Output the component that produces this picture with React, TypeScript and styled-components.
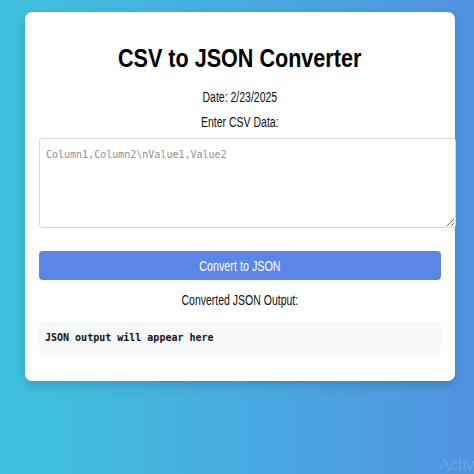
import React from "react";
import styled, { createGlobalStyle } from "styled-components";

const GlobalStyle = createGlobalStyle`
  html, body {
    margin: 0;
    padding: 0;
  }
  body {
    width: 474px;
    height: 474px;
    overflow: hidden;
    font-family: "Liberation Sans", Arial, sans-serif;
    background: linear-gradient(to right, #3ec1dd 0%, #46aedf 45%, #5092e0 100%);
  }
`;

const Page = styled.div`
  position: relative;
  width: 474px;
  height: 474px;
  padding: 12px 19px 0 25px;
  box-sizing: border-box;
`;

const Card = styled.div`
  width: 430px;
  box-sizing: border-box;
  background: #ffffff;
  border-radius: 7px;
  padding: 30px 14px 28px;
  box-shadow: 0 4px 10px rgba(0, 0, 0, 0.16);
  display: flex;
  flex-direction: column;
  align-items: stretch;
`;

/* Narrow face: the sans is drawn condensed horizontally */
const Narrow = styled.span<{ $x: number }>`
  display: inline-block;
  white-space: nowrap;
  transform: scaleX(${(p) => p.$x});
  transform-origin: center;
`;

const Title = styled.h1`
  margin: 0;
  font-size: 26px;
  font-weight: bold;
  text-align: center;
  color: #000;
  line-height: 32px;
`;

const Label = styled.p<{ $top: number }>`
  margin: ${(p) => p.$top}px 0 0;
  font-size: 14px;
  line-height: 16px;
  text-align: center;
  color: #111;
`;

const Input = styled.textarea`
  margin-top: 8px;
  width: 100%;
  height: 72px;
  box-sizing: content-box;
  padding: 9px 7px 7px 6px;
  border: 1px solid #d8d8d8;
  border-radius: 3px;
  font-family: "DejaVu Sans Mono", "Liberation Mono", monospace;
  font-size: 10px;
  line-height: 14px;
  resize: vertical;
  outline: none;
  &::placeholder {
    color: #8f8f8f;
  }
`;

const Button = styled.button`
  margin-top: 23px;
  height: 29px;
  border: none;
  border-radius: 4px;
  background: #5b86e5;
  color: #fff;
  font-family: "Liberation Sans", Arial, sans-serif;
  font-size: 14px;
  cursor: pointer;
`;

const Output = styled.pre`
  margin: 14px 0 0;
  height: 31px;
  background: #f7f8fa;
  border-radius: 4px;
  padding: 0 6px;
  display: flex;
  align-items: center;
  font-family: "DejaVu Sans Mono", "Liberation Mono", monospace;
  font-size: 10px;
  font-weight: bold;
  color: #111;
`;

const Watermark = styled.span`
  position: absolute;
  right: 0;
  bottom: 0;
  font-family: "Liberation Sans", Arial, sans-serif;
  font-size: 16px;
  color: rgba(255, 255, 255, 0.18);
`;

export default function App() {
  return (
    <>
      <GlobalStyle />
      <Page>
        <Card>
          <Title>
            <Narrow $x={0.83}>CSV to JSON Converter</Narrow>
          </Title>
          <Label $top={15}>
            <Narrow $x={0.75}>Date: 2/23/2025</Narrow>
          </Label>
          <Label $top={9}>
            <Narrow $x={0.75}>Enter CSV Data:</Narrow>
          </Label>
          <Input placeholder="Column1,Column2\nValue1,Value2" />
          <Button>
            <Narrow $x={0.77}>Convert to JSON</Narrow>
          </Button>
          <Label $top={12}>
            <Narrow $x={0.75}>Converted JSON Output:</Narrow>
          </Label>
          <Output>JSON output will appear here</Output>
        </Card>
        <Watermark>Activ</Watermark>
      </Page>
    </>
  );
}
